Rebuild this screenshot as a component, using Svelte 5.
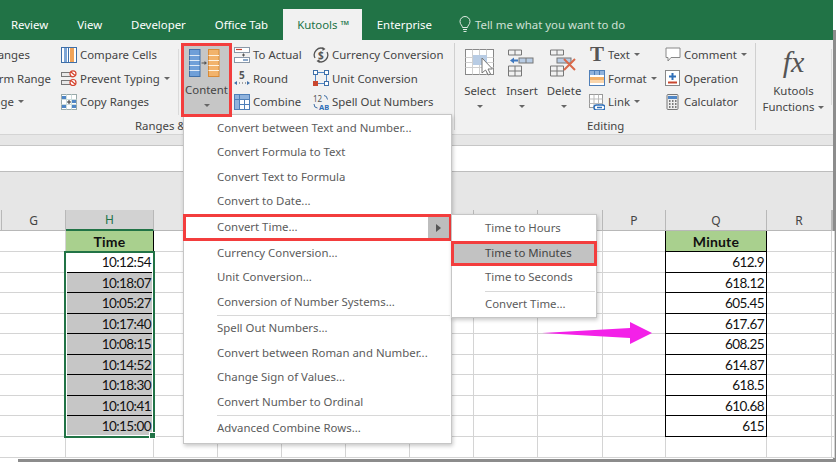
<script>
  const tabs = ['Review', 'View', 'Developer', 'Office Tab', 'Kutools ™', 'Enterprise'];
  const columns = [
    { n: '' }, { n: 'G' }, { n: 'H', cur: true }, { n: '' }, { n: '' }, { n: '' }, { n: '' },
    { n: '' }, { n: '' }, { n: '' }, { n: 'P' }, { n: 'Q' }, { n: 'R' }, { n: '' }
  ];
  const times = ['10:12:54', '10:18:07', '10:05:27', '10:17:40', '10:08:15', '10:14:52', '10:18:30', '10:10:41', '10:15:00'];
  const minutes = ['612.9', '618.12', '605.45', '617.67', '608.25', '614.87', '618.5', '610.68', '615'];
  const rows = [
    { h: 'Time', q: 'Minute' },
    ...times.map((t, i) => ({ t, m: minutes[i], i })),
    { blank: true }
  ];
  const menu = [
    [
      'Convert between Text and Number...',
      'Convert Formula to Text',
      'Convert Text to Formula',
      'Convert to Date...',
      'Convert Time...',
      'Currency Conversion...',
      'Unit Conversion...',
      'Conversion of Number Systems...'
    ],
    ['Spell Out Numbers...', 'Convert between Roman and Number...', 'Change Sign of Values...', 'Convert Number to Ordinal'],
    ['Advanced Combine Rows...']
  ];
</script>

<div class="page">
  <div class="window">
    <div class="tabs">
      {#each tabs as t}
        <div class="tab" class:active={t.startsWith('Kutools')}>{t}</div>
      {/each}
      <div class="tell">
        <svg width="12" height="17" viewBox="0 0 12 17" fill="none" stroke="#dfeae3" stroke-width="1"><path d="M3.500 11.500C3.500 9.500 1 8.500 1 5.500a5 5 0 0 1 10 0c0 3-2.500 4-2.500 6zM4 13.500h4M4.500 15.500h3"/></svg>
        <span>Tell me what you want to do</span>
      </div>
    </div>

    <div class="ribbon">
      <div class="group g-ranges">
        <div class="body">
          <div class="col col-a">
            <div class="row cut c1"><span>Ranges</span></div>
            <div class="row cut c2"><span>Transform Range</span></div>
            <div class="row cut c3"><span>Range</span><i class="caret"></i></div>
          </div>
          <div class="col col-b">
            <div class="row">
              <svg class="ic" viewBox="0 0 16 16"><rect x=".5" y=".5" width="15" height="15" fill="#fff" stroke="#3f6fa8"/><rect x="3" y="1" width="3" height="14" fill="#7ea6d6"/><rect x="9" y="1" width="4" height="14" fill="#f0a45a"/><path d="M7.500 1v14" stroke="#3f6fa8"/></svg>
              <span>Compare Cells</span>
            </div>
            <div class="row">
              <svg class="ic" viewBox="0 0 16 16" fill="none"><rect x=".5" y="2.500" width="10" height="4" fill="#e8e8e8" stroke="#777"/><rect x=".5" y="10.500" width="10" height="4" fill="#e8e8e8" stroke="#777"/><g stroke="#d5442f" stroke-width="1.200" fill="#fff"><circle cx="12" cy="3.800" r="3"/><circle cx="12" cy="12.500" r="3"/><path d="M10 2l4 3.500M10 10.500l4 3.500"/></g></svg>
              <span>Prevent Typing</span><i class="caret"></i>
            </div>
            <div class="row">
              <svg class="ic" viewBox="0 0 16 16" fill="none"><rect x=".5" y=".5" width="15" height="15" fill="#fff" stroke="#9aa"/><path d="M.5 5.500h15M.5 10.500h15M5.500.5v15M10.500.5v15" stroke="#cdd"/><rect x="1" y="2" width="4" height="3" fill="#4f86c6"/><rect x="1" y="11" width="4" height="3" fill="#4f86c6"/><rect x="11" y="6" width="4" height="3" fill="#4f86c6"/><rect x="11" y="11" width="4" height="3" fill="#4f86c6"/><path d="M6 8h4M8 6v4" stroke="#333"/></svg>
              <span>Copy Ranges</span>
            </div>
          </div>
          <div class="sep"></div>
          <div class="content-btn">
            <svg class="content-ic" width="36" height="29" viewBox="0 0 36 29">
              <rect x=".5" y=".5" width="10.500" height="27" fill="#6f9fd8" stroke="#3f6fa8"/>
              <path d="M.5 6.500h10M.5 11.500h10M.5 16.500h10M.5 21.500h10" stroke="#dfeaf6"/>
              <rect x="19.500" y=".5" width="10.500" height="27" fill="#f2b36c" stroke="#d98a35"/>
              <path d="M19.500 6.500h10.500M19.500 11.500h10.500M19.500 16.500h10.500M19.500 21.500h10.500" stroke="#fff2df"/>
              <path d="M12.500 14h4.500" stroke="#555"/><path d="M15.500 12l2.500 2-2.500 2z" fill="#555"/>
            </svg>
            <span class="big-label">Content</span>
            <i class="caret big"></i>
          </div>
          <div class="col col-c">
            <div class="row">
              <svg class="ic" viewBox="0 0 16 16" fill="none"><rect x=".5" y=".5" width="15" height="5" fill="#fff" stroke="#8a98a8"/><path d="M2 2.500h6" stroke="#c5402e" stroke-width="1.200"/><rect x=".5" y="10.500" width="15" height="5" fill="#fff" stroke="#8a98a8"/><path d="M9 13h5" stroke="#3f6fa8" stroke-width="1.200"/><path d="M9.500 6.500v3M8 8h3" stroke="#555"/></svg>
              <span>To Actual</span>
            </div>
            <div class="row">
              <svg class="ic" viewBox="0 0 16 16"><text class="ic-t" x="5" y="9">5</text><path d="M2 13h12" stroke="#555" stroke-dasharray="1 2"/><path d="M0 13l3-2v4zM16 13l-3-2v4z" fill="#3f6fa8"/></svg>
              <span>Round</span>
            </div>
            <div class="row">
              <svg class="ic" viewBox="0 0 16 16" fill="none"><rect x=".5" y=".5" width="15" height="15" fill="#fff" stroke="#4f7fb8"/><rect x="1" y="1" width="14" height="4" fill="#8fb2dc"/><rect x="1" y="1" width="4" height="14" fill="#8fb2dc"/><path d="M5.500 1v14M10.500 5v10M1 5.500h14M5 10.500h10" stroke="#4f7fb8"/></svg>
              <span>Combine</span>
            </div>
          </div>
          <div class="col col-d">
            <div class="row">
              <svg class="ic" viewBox="0 0 16 16" fill="none"><path d="M2 11A6.800 6.800 0 0 1 11 1.800M14 5A6.800 6.800 0 0 1 5 14.200" stroke="#555" stroke-width="1.300"/><path d="M9.500 0l3 2-3 2zM6.500 12l-3 2 3 2z" fill="#555"/><text class="ic-t" x="5" y="12">$</text></svg>
              <span>Currency Conversion</span>
            </div>
            <div class="row">
              <svg class="ic" viewBox="0 0 16 16" fill="none"><rect x="2.500" y="2.500" width="11" height="11" stroke="#4f86c6"/><rect x=".5" y=".5" width="4" height="4" fill="#fff" stroke="#3f6fa8"/><rect x="11.500" y=".5" width="4" height="4" fill="#fff" stroke="#3f6fa8"/><rect x="11.500" y="11.500" width="4" height="4" fill="#fff" stroke="#3f6fa8"/><rect y="11" width="5" height="5" fill="#c9472f"/></svg>
              <span>Unit Conversion</span>
            </div>
            <div class="row">
              <svg class="ic" viewBox="0 0 16 16"><text class="ic-n" x="0" y="7.500">12</text><text class="ic-ab" x="6" y="15.500">AB</text><path d="M11 1.500q3 0 3.500 4M1 10q0 4 3.500 4" stroke="#3f6fa8" fill="none"/></svg>
              <span>Spell Out Numbers</span>
            </div>
          </div>
        </div>
        <div class="label l-ranges">Ranges &amp;</div>
      </div>

      <div class="group g-editing">
        <div class="body">
          <div class="big-btn">
            <svg width="30" height="28" viewBox="0 0 30 28" fill="none"><rect x=".5" y=".5" width="28" height="25" fill="#fff" stroke="#888"/><path d="M.5 8.500h28M.5 13.500h28M.5 18.500h28M7.500.5v25M14.500.5v25M21.500.5v25" stroke="#d0d0d0"/><rect x="8" y="6" width="14" height="10" fill="#b8cce4"/><path d="M17 9l0 15 3.500-3 3 5 2-1-2.500-5h4.500z" fill="#fff" stroke="#777"/></svg>
            <span class="big-label">Select</span><i class="caret big"></i>
          </div>
          <div class="big-btn">
            <svg width="30" height="28" viewBox="0 0 30 28" fill="none"><path d="M1.500 1h13v5h-13zM8 1v5M1.500 17h13v10h-13zM1.500 22h13M8 17v10" stroke="#777"/><rect x="12" y="9" width="14" height="5" fill="#b8cce4" stroke="#777"/><path d="M19 9v5" stroke="#777"/><path d="M3 11.500l4-3v2h4v2H7v2z" fill="#3f78bf"/></svg>
            <span class="big-label">Insert</span><i class="caret big"></i>
          </div>
          <div class="big-btn">
            <svg width="30" height="28" viewBox="0 0 30 28" fill="none"><path d="M1.500 1h13v5h-13zM8 1v5M1.500 17h13v10h-13zM1.500 22h13M8 17v10" stroke="#777"/><rect x="8" y="9" width="14" height="5" fill="#b8cce4" stroke="#777"/><path d="M15 10l11 11M26 10L15 21" stroke="#d9694a" stroke-width="2"/></svg>
            <span class="big-label">Delete</span><i class="caret big"></i>
          </div>
          <div class="col col-text">
            <div class="row"><span class="t-icon">T</span><span>Text</span><i class="caret"></i></div>
            <div class="row">
              <svg class="ic" viewBox="0 0 16 16"><rect x=".5" y=".5" width="15" height="15" fill="#fff" stroke="#4f7fb8"/><rect x="1" y="1" width="14" height="4" fill="#8fb2dc"/><rect x="1" y="7" width="14" height="3" fill="#f4b26a"/><rect x="1" y="10" width="14" height="3" fill="#f9d5ac"/><path d="M5.500 1v4M10.500 1v4" stroke="#4f7fb8"/></svg>
              <span>Format</span><i class="caret"></i>
            </div>
            <div class="row">
              <svg class="ic" viewBox="0 0 16 16" fill="none"><rect x=".5" y=".5" width="13" height="13" fill="#fff" stroke="#999"/><path d="M.5 5h13M.5 9.500h13M5 .5v13M9.500.5v13" stroke="#bbb"/><rect x="5" y="11" width="11" height="5" rx="2.500" fill="#fff" stroke="#2f6fb8" stroke-width="1.500"/><path d="M8 13.500h5" stroke="#2f6fb8" stroke-width="1.500"/></svg>
              <span>Link</span><i class="caret"></i>
            </div>
          </div>
          <div class="col col-comment">
            <div class="row">
              <svg class="ic" viewBox="0 0 16 16" fill="none"><path d="M1 1h14v9.500H6L3 14v-3.500H1z" fill="#fff" stroke="#888"/></svg>
              <span>Comment</span><i class="caret"></i>
            </div>
            <div class="row">
              <svg class="ic" viewBox="0 0 16 16"><rect x=".5" y=".5" width="14" height="15" fill="#fff" stroke="#888"/><path d="M7.500 3v7M4 6.500h7" stroke="#2f6fb8" stroke-width="2"/><path d="M3 12.500h9" stroke="#c9472f" stroke-width="2"/></svg>
              <span>Operation</span>
            </div>
            <div class="row">
              <svg class="ic" viewBox="0 0 16 16"><rect x="2" y=".5" width="11" height="15" rx="1" fill="#eee" stroke="#777"/><rect x="3" y="2" width="9" height="3" fill="#4f86c6"/><path d="M4 7h1.500M7 7h1.500M10 7h1.500M4 10h1.500M7 10h1.500M10 10h1.500M4 13h1.500M7 13h1.500M10 13h1.500" stroke="#555" stroke-width="1.500"/></svg>
              <span>Calculator</span>
            </div>
          </div>
        </div>
        <div class="label l-editing">Editing</div>
      </div>

      <div class="group g-fx">
        <div class="fx-btn">
          <span class="fx">fx</span>
          <span class="big-label">Kutools</span>
          <span class="fn-line"><span>Functions</span><i class="caret"></i></span>
        </div>
        <div class="sep short"></div>
      </div>
    </div>

    <div class="gap-strip"></div>
    <div class="formula"></div>
    <div class="band"></div>

    <div class="sheet">
      {#each columns as c}
        <div class="hd" class:cur={c.cur}>{c.n}</div>
      {/each}
      {#each rows as r}
        {#each columns as c}
          {#if c.n === 'H' && !r.blank}
            <div class="cell h" class:title={r.h} class:sel={r.i > 0}>{r.h ?? r.t}</div>
          {:else if c.n === 'Q' && !r.blank}
            <div class="cell q" class:title={r.q}>{r.q ?? r.m}</div>
          {:else}
            <div class="cell"></div>
          {/if}
        {/each}
      {/each}
      <div class="selection"><i class="handle"></i></div>
    </div>
    <div class="bottom-shadow"></div>

    <svg class="arrow" width="112" height="24" viewBox="0 0 112 24"><path d="M0 12L88 7V1l22 11-22 11v-6z" fill="#f321e8"/></svg>

    <div class="menu main-menu">
      {#each menu as section, si}
        {#if si > 0}<div class="menu-sep"></div>{/if}
        {#each section as item}
          {#if item === 'Convert Time...'}
            <div class="item picked">
              <span>{item}</span>
              <span class="sub-arrow"><i></i></span>
            </div>
          {:else}
            <div class="item">{item}</div>
          {/if}
        {/each}
      {/each}
    </div>

    <div class="menu sub-menu">
      <div class="item">Time to Hours</div>
      <div class="item on">Time to Minutes</div>
      <div class="item">Time to Seconds</div>
      <div class="menu-sep"></div>
      <div class="item">Convert Time...</div>
    </div>
  </div>
  <div class="edge"></div>
</div>

<style>
  :global(body) { margin: 0; background: #fff; }
  .page {
    width: 836px; height: 462px; overflow: hidden; display: flex; background: #fff;
    font-family: "Noto Sans", "Open Sans", sans-serif; font-size: 11.400px; color: #444;
  }
  .window { width: 833px; height: 462px; position: relative; flex: none; display: flex; flex-direction: column; }
  .edge { width: 3px; margin-top: 30px; background: #8c8c8c; }

  .tabs { height: 40px; flex: none; background: #217346; display: flex; color: #fff; }
  .tab { padding: 8px 14.500px 0; display: flex; align-items: center; height: 40px; box-sizing: border-box; white-space: nowrap; }
  .tab:first-child { margin-left: -3.500px; }
  .tab.active { background: #f1f1f1; color: #217346; margin-top: 9px; height: 31px; padding-top: 0; padding-right: 13px; }
  .tell { display: flex; align-items: center; gap: 4px; margin-left: 12.500px; padding-top: 8px; color: #cfe0d5; }

  .ribbon { height: 94px; flex: none; background: #f1f1f1; display: flex; box-sizing: border-box; padding-top: 3px; }
  .group { display: flex; flex-direction: column; }
  .body { display: flex; height: 77px; flex: none; }
  .label { height: 10px; line-height: 11px; white-space: nowrap; }
  .g-ranges { width: 454px; border-right: 1px solid #d0d0d0; height: 87px; flex: none; }
  .l-ranges { padding-left: 135px; }
  .g-editing { width: 301px; border-right: 1px solid #d0d0d0; height: 87px; flex: none; padding-left: 4px; box-sizing: border-box; }
  .l-editing { padding-left: 128px; }
  .g-fx { flex: 1; flex-direction: row; }

  .col { display: flex; flex-direction: column; flex: none; }
  .row { display: flex; align-items: center; height: 23.500px; white-space: nowrap; }
  .ic { width: 16px; height: 16px; margin-right: 3px; flex: none; }
  .ic-t { font: 700 10px "Noto Sans", sans-serif; fill: #555; }
  .ic-n { font: 8px "Noto Sans", sans-serif; fill: #555; }
  .ic-ab { font: 700 7.500px "Noto Sans", sans-serif; fill: #2f6fb8; }
  .caret { display: inline-block; width: 0; height: 0; border: 3px solid transparent; border-top: 3px solid #666; border-bottom: 0; margin-left: 4px; }
  .caret.big { margin-left: 0; margin-top: 6px; }

  .col-a { width: 61px; }
  .cut { justify-content: flex-end; }
  .c1 { width: 30px; }
  .c2 { width: 51px; }
  .c3 { width: 24px; }
  .col-b { width: 117px; }
  .sep { width: 1px; height: 66px; background: #dadada; margin-top: 6px; flex: none; }
  .sep.short { height: 56px; }
  .content-btn {
    width: 51px; height: 74px; box-sizing: border-box; margin: 0 2px; flex: none;
    border: 3px solid #f33d3d; background: #c6c6c6; position: relative; z-index: 1;
    display: flex; flex-direction: column; align-items: center;
  }
  .content-ic { margin-top: 3px; margin-left: 1px; flex: none; }
  .big-label { line-height: 16px; white-space: nowrap; }
  .content-btn .big-label { margin-top: 4px; }
  .col-c { width: 79px; }
  .col-d { width: 120px; }

  .big-btn { width: 42px; flex: none; display: flex; flex-direction: column; align-items: center; padding-top: 6px; }
  .big-btn .big-label { margin-top: 6px; }
  .col-text { width: 76px; margin-left: 4px; }
  .col-comment { width: 88px; }
  .t-icon { width: 16px; margin-right: 3px; font: bold 21px/1 "Liberation Serif", serif; color: #555; text-align: center; }

  .fx-btn { display: flex; flex-direction: column; align-items: center; width: 75px; flex: none; }
  .fx { font: italic 30px/30px "Liberation Serif", serif; color: #555; margin: 4px 0 6px; }
  .fn-line { display: flex; align-items: center; line-height: 16px; white-space: nowrap; }

  .gap-strip { height: 10px; flex: none; background: #e6e6e6; border-top: 1px solid #d4d4d4; border-bottom: 1px solid #c6c6c6; }
  .formula { height: 25px; flex: none; background: #fff; border-bottom: 1px solid #bdbdbd; }
  .band { height: 38px; flex: none; background: #e6e6e6; }

  .sheet {
    flex: none; position: relative; display: grid; font-family: Lato, "Noto Sans", sans-serif; font-size: 13.500px; letter-spacing: -.55px; color: #111;
    grid-template-columns: 2px 64px 88px 64px 64px 64px 64px 64px 64px 65px 63px 101px 65px 1px;
    grid-template-rows: 21px 21px 21px 20px 21px 20px 21px 20px 21px 20px 21px 21px;
  }
  .hd {
    background: #e6e6e6; border-right: 1px solid #b8b8b8; border-bottom: 1px solid #b8b8b8; box-sizing: border-box; letter-spacing: 0;
    display: flex; align-items: center; justify-content: center; color: #444; font-family: "Noto Sans", sans-serif; font-size: 12px;
  }
  .hd.cur { background: #d2d2d2; color: #217346; border-bottom: 2px solid #217346; }
  .cell {
    box-sizing: border-box; border-right: 1px solid #d4d4d4; border-bottom: 1px solid #d4d4d4; background: #fff;
    display: flex; align-items: center; justify-content: flex-end; padding-right: 2px; overflow: hidden;
  }
  .cell.h { border-bottom: 1px solid #000; border-right: 1px solid #000; }
  .cell.h.sel { background: #c6c6c6; }
  .cell.q { border-bottom: 1px solid #000; border-left: 1px solid #000; border-right: 1px solid #000; margin-left: -1px; }
  .cell.title { background: #a9d08e; justify-content: center; font-weight: 700; font-size: 14px; letter-spacing: .2px; padding-right: 0; }
  .selection {
    position: absolute; left: 64px; top: 41px; width: 91px; height: 187px; box-sizing: border-box;
    border: 2px solid #217346; box-shadow: inset 0 0 0 1px #fff; pointer-events: none;
  }
  .handle { position: absolute; right: -3px; bottom: -3px; width: 5px; height: 5px; background: #217346; border: 1px solid #fff; }
  .bottom-shadow { flex: 1; margin-left: 18px; background: #8c8c8c; margin-top: 1px; }

  .arrow { position: absolute; left: 542px; top: 321px; }

  .menu {
    position: absolute; background: #fff; border: 1px solid #c6c6c6; box-sizing: border-box;
    box-shadow: 1px 2px 4px rgba(0, 0, 0, .22); color: #5b5b5b; white-space: nowrap;
  }
  .main-menu { left: 183px; top: 114px; width: 269px; height: 330px; padding-top: 1px; }
  .item { height: 24.500px; box-sizing: border-box; padding-bottom: 2px; display: flex; align-items: center; padding-left: 33px; position: relative; }
  .picked { margin: 0 -1px; height: 27px; border: 3px solid #f33d3d; padding: 0 0 0 31px; justify-content: space-between; background: #fff; }
  .picked > span:first-child { margin-bottom: 3px; }
  .sub-arrow { width: 21px; height: 21px; background: #bdbdbd; display: flex; align-items: center; justify-content: center; }
  .sub-arrow i { width: 0; height: 0; border: 4px solid transparent; border-left: 5px solid #555; border-right: 0; }
  .menu-sep { height: 1px; background: #d8d8d8; margin: .5px 1px .5px 33px; }
  .sub-menu { left: 451px; top: 214px; width: 146px; height: 104px; padding-top: 1px; }
  .sub-menu .on { margin: 0 -1px; height: 25px; border: 3px solid #f33d3d; background: #c2c2c2; padding: 0 0 1px 31px; color: #444; }
</style>
